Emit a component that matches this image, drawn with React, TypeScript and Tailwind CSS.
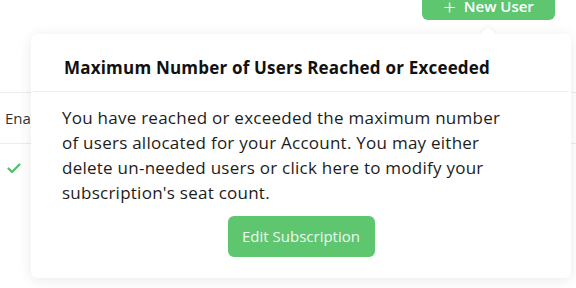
import React from 'react';

const font = { fontFamily: "'Open Sans', 'Liberation Sans', sans-serif" };

function CheckIcon() {
  return (
    <svg width="14" height="11" viewBox="0 0 14 11" fill="none">
      <path d="M1.5 5.5L5 9L12.5 1.5" stroke="#4cc064" strokeWidth="2.2" strokeLinecap="round" strokeLinejoin="round" />
    </svg>
  );
}

export default function App() {
  return (
    <div className="relative w-[576px] h-[288px] overflow-hidden bg-white text-[#222]" style={font}>
      {/* page behind the popover */}
      <div className="flex justify-end pr-[21px]">
        <button
          type="button"
          className="mt-[-12px] h-[32px] w-[133px] rounded-md bg-[#5ec66f] text-white text-[15px] font-semibold flex items-center justify-center gap-2 pt-[4px]"
        >
          <span className="text-[22px] font-light leading-none">+</span> New User
        </button>
      </div>
      <div className="mt-[72px] border-t border-[#ececec]">
        <div className="h-[51px] flex items-center pl-[5px] text-[15px] text-[#333] border-b border-[#ececec]">
          Enabled
        </div>
        <div className="h-[48px] flex items-center pl-[7px]">
          <CheckIcon />
        </div>
      </div>

      {/* popover */}
      <div className="absolute left-[31px] top-[34px] w-[540px] h-[244px] rounded-md bg-white shadow-[0_2px_14px_rgba(0,0,0,0.09)] flex flex-col">
        <div className="absolute -top-[5px] left-[451px] w-[12px] h-[12px] rotate-45 bg-white rounded-[2px] shadow-[-2px_-2px_4px_rgba(0,0,0,0.03)]" />
        <div className="h-[58px] flex items-center pl-[31px] border-b border-[#eeeeee] mx-[2px] pt-[14px] pb-[4px]">
          <h2 className="text-[17px] font-bold text-[#111] tracking-[0.2px]">Maximum Number of Users Reached or Exceeded</h2>
        </div>
        <div className="px-[31px] pt-[13px] text-[17px] leading-[25px] text-[#1c1c1c] tracking-[0.25px]">
          You have reached or exceeded the maximum number
          <br />
          of users allocated for your Account. You may either
          <br />
          delete un-needed users or click here to modify your
          <br />
          subscription's seat count.
        </div>
        <div className="flex justify-center mt-[11px]">
          <button
            type="button"
            className="h-[41px] w-[147px] rounded-md bg-[#5ec66f] text-[#eefaf0] text-[15px] flex items-center justify-center"
          >
            Edit Subscription
          </button>
        </div>
      </div>
    </div>
  );
}
